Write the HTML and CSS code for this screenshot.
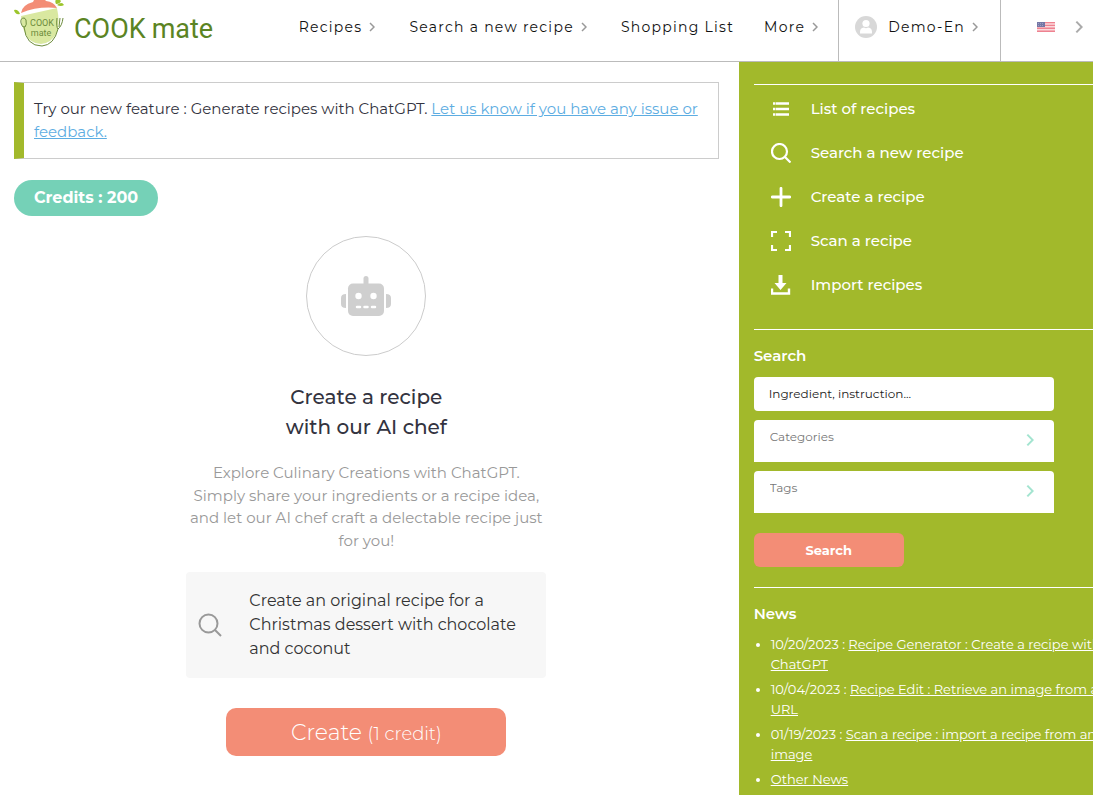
FILE: index.html
```html
<!DOCTYPE html>
<html lang="en">
<head>
    <meta charset="UTF-8">
    <meta name="viewport" content="width=device-width, initial-scale=1.0">
    <title>COOKmate - Recipe Generator</title>
    <link rel="stylesheet" href="styles.css">
</head>
<body>
    <header class="header">
        <a href="#" class="logo" aria-label="COOKmate">
            <svg class="logo-pot" width="52" height="48" viewBox="0 0 52 48">
                <path d="M7 16 L43 8 Q46 22 43 32 Q38 43 27 44 Q16 44 11 33 Q7 24 7 16Z" fill="#d9e8a0"/>
                <path d="M7 13 Q8 5 19 2 L20 0 H31 L32 1 Q40 2 43 8 Q24 6 7 13Z" fill="#f38d76"/>
                <path d="M21 1 Q26 -1 31 1" fill="none" stroke="#f38d76" stroke-width="2"/>
                <path d="M6 14 Q4 9 0 10 Q1 15 6 14Z M42 4 Q40 0 44 -2 L47 1 Q46 4 42 4Z M43 5 Q48 1 50 5 Q47 7 43 5Z" fill="#9cc52c"/>
                <path d="M10 18 Q6 18 7 23 Q8 28 11 27 Q13 25 12 20 Q11 18 10 18Z M10 27 Q12 46 28 46 Q40 45 44 29 M44 29 Q42 27 43 18 M44 29 Q48 26 49 18 M46 18 L45 27" fill="none" stroke="#6d8c3c" stroke-width="1"/>
                <text x="28" y="26" class="pot-text">COOK</text>
                <text x="27" y="36" class="pot-text">mate</text>
            </svg>
            <span class="logo-text"><span>COOK</span><span>mate</span></span>
        </a>
        <nav class="nav">
            <a href="#">Recipes <svg class="chevron" viewBox="0 0 6 10"><path d="M1 1l4 4-4 4"/></svg></a>
            <a href="#">Search a new recipe <svg class="chevron" viewBox="0 0 6 10"><path d="M1 1l4 4-4 4"/></svg></a>
            <a href="#">Shopping List</a>
            <a href="#">More <svg class="chevron" viewBox="0 0 6 10"><path d="M1 1l4 4-4 4"/></svg></a>
        </nav>
        <a href="#" class="account">
            <svg class="avatar" width="22" height="22" viewBox="0 0 22 22">
                <circle cx="11" cy="11" r="11" fill="#d8d8d8"/>
                <circle cx="11" cy="7.5" r="3.6" fill="#fff"/>
                <path d="M5 17.5 Q4.500 11.500 9 11.500 Q11 13 13 11.500 Q17.500 11.500 17 17.500Z" fill="#fff"/>
            </svg>
            <span>Demo-En</span>
            <svg class="chevron" viewBox="0 0 6 10"><path d="M1 1l4 4-4 4"/></svg>
        </a>
        <a href="#" class="language" aria-label="Language">
            <svg width="18" height="10" viewBox="0 0 18 10">
                <path fill="#fbd9dd" d="M0 0h18v10H0z"/>
                <path stroke="#ee8290" stroke-width="1.4" d="M0 .6h18M0 3.400h18M0 6.200h18M0 9.200h18"/>
                <path fill="#7577a6" d="M0 0h8v5H0z"/>
                <path stroke="#b9bad2" stroke-width=".6" stroke-dasharray="1 1" d="M1 1.500h6M1 3.500h6"/>
            </svg>
            <svg class="chevron chevron-big" viewBox="0 0 6 10"><path d="M1 1l4 4-4 4"/></svg>
        </a>
    </header>

    <div class="layout">
        <main class="main">
            <div class="notice">Try our new feature : Generate recipes with ChatGPT. <a href="#">Let us know if you have any issue or feedback.</a></div>
            <div class="credits">Credits : 200</div>

            <section class="generator">
                <div class="robot">
                    <svg width="50" height="40" viewBox="0 0 50 40" fill="#cfcfcf">
                        <rect x="22.500" y="0" width="5" height="12" rx="2.500"/>
                        <rect x="7" y="7.500" width="36" height="32.500" rx="5"/>
                        <path d="M5 18v14Q0 32 0 28v-6q0-4 5-4zM45 18v14q5 0 5-4v-6q0-4-5-4z"/>
                        <circle cx="17.500" cy="20" r="3.200" fill="#fff"/>
                        <circle cx="32.500" cy="20" r="3.200" fill="#fff"/>
                        <path d="M16 31h3M23.500 31h3M31 31h3" stroke="#fff" stroke-width="2.500" stroke-linecap="round"/>
                    </svg>
                </div>
                <h1>Create a recipe<br>with our AI chef</h1>
                <p>Explore Culinary Creations with ChatGPT.<br>Simply share your ingredients or a recipe idea,<br>and let our AI chef craft a delectable recipe just<br>for you!</p>
                <label class="prompt">
                    <svg width="24" height="24" viewBox="0 0 24 24" fill="none" stroke="#999" stroke-width="2">
                        <circle cx="10.500" cy="10.500" r="9"/>
                        <path d="M17 17l6 6"/>
                    </svg>
                    <textarea rows="3" aria-label="Recipe idea">Create an original recipe for a Christmas dessert with chocolate and coconut</textarea>
                </label>
                <button type="button" class="btn-create">Create <small>(1 credit)</small></button>
            </section>
        </main>

        <aside class="sidebar">
            <ul class="menu">
                <li><a href="#">
                    <svg viewBox="0 0 20 20" fill="none" stroke="#fff" stroke-width="2.600"><path d="M2 4.500h2.500M5 4.500H18M2 10h2.500M5 10H18M2 15.500h2.500M5 15.500H18"/></svg>
                    List of recipes</a></li>
                <li><a href="#">
                    <svg viewBox="0 0 20 20" fill="none" stroke="#fff" stroke-width="2.200"><circle cx="8.500" cy="8.500" r="7.500"/><path d="M14 14l5.500 5.500"/></svg>
                    Search a new recipe</a></li>
                <li><a href="#">
                    <svg viewBox="0 0 20 20" fill="none" stroke="#fff" stroke-width="2.800" stroke-linecap="round"><path d="M1.300 10h17.400M10 1.300v17.400"/></svg>
                    Create a recipe</a></li>
                <li><a href="#">
                    <svg viewBox="0 0 20 20" fill="none" stroke="#fff" stroke-width="2.200"><path d="M1 6V1h5M14 1h5v5M19 14v5h-5M6 19H1v-5"/></svg>
                    Scan a recipe</a></li>
                <li><a href="#">
                    <svg viewBox="0 0 20 20" fill="#fff"><path d="M7.500 0h4v8h4l-6 7-6-7h4z"/><path d="M1 13.500v5h17v-5" fill="none" stroke="#fff" stroke-width="2.400"/></svg>
                    Import recipes</a></li>
            </ul>

            <form class="search">
                <h2>Search</h2>
                <input type="text" placeholder="Ingredient, instruction..." aria-label="Ingredient, instruction">
                <label class="select-box">
                    <select aria-label="Categories"><option>Categories</option></select>
                    <svg class="chevron" viewBox="0 0 6 10"><path d="M1 1l4 4-4 4"/></svg>
                </label>
                <label class="select-box">
                    <select aria-label="Tags"><option>Tags</option></select>
                    <svg class="chevron" viewBox="0 0 6 10"><path d="M1 1l4 4-4 4"/></svg>
                </label>
                <button type="button" class="btn-search">Search</button>
            </form>

            <section class="news">
                <h2>News</h2>
                <ul>
                    <li>10/20/2023 : <a href="#">Recipe Generator : Create a recipe with<br>ChatGPT</a></li>
                    <li>10/04/2023 : <a href="#">Recipe Edit : Retrieve an image from an<br>URL</a></li>
                    <li>01/19/2023 : <a href="#">Scan a recipe : import a recipe from an<br>image</a></li>
                    <li><a href="#">Other News</a></li>
                </ul>
            </section>
        </aside>
    </div>
</body>
</html>
```
FILE: styles.css
```css
* {
    box-sizing: border-box;
}

body {
    margin: 0;
    min-height: 100vh;
    display: flex;
    flex-direction: column;
    overflow-x: hidden;
    font-family: Montserrat, Inter, sans-serif;
    font-size: 15px;
    line-height: 1.5;
    color: #333340;
    background-color: #ffffff;
}

input, textarea, select, button {
    font-family: inherit;
    border: none;
}

.chevron {
    width: 6px;
    height: 10px;
    fill: none;
    stroke: #999999;
    stroke-width: 1.5;
}

/* Header */
.header {
    display: flex;
    height: 62px;
    border-bottom: 1px solid #bbbbbb;
    font-size: 14px;
}

.header a {
    color: #111111;
    text-decoration: none;
    letter-spacing: 0.09em;
}

.header .logo {
    display: flex;
    gap: 8px;
    padding-left: 14px;
    letter-spacing: normal;
}

.pot-text {
    font-family: Roboto, sans-serif;
    font-size: 9px;
    text-anchor: middle;
    fill: #6d8c3c;
}

.logo-text {
    display: flex;
    gap: 6px;
    font-family: Roboto, sans-serif;
    font-size: 27px;
    line-height: 58px;
    color: #5b8423;
}

.nav {
    display: flex;
    gap: 30px;
    margin-left: auto;
    padding-right: 16px;
}

.nav a, .account, .language {
    display: flex;
    align-items: center;
    gap: 7px;
    padding-bottom: 7px;
}

.nav .chevron, .account .chevron {
    margin-right: 4px;
}

.account {
    padding-left: 16px;
    padding-right: 18px;
    border-left: 1px solid #bbbbbb;
    border-right: 1px solid #bbbbbb;
}

.avatar {
    margin-right: 4px;
}

.language {
    gap: 20px;
    padding-left: 36px;
    padding-right: 10px;
}

.chevron-big {
    width: 8px;
    height: 14px;
    stroke: #aaaaaa;
}

/* Page columns */
.layout {
    flex: 1;
    display: grid;
    grid-template-columns: 2fr 1fr;
    margin-right: -15px;
}

.main {
    padding: 20px 20px 20px 14px;
}

.notice {
    padding: 15px 10px;
    border: 1px solid #cccccc;
    border-left: 10px solid #a2b92b;
}

.notice a {
    color: #5dade2;
}

.credits {
    width: fit-content;
    margin-top: 21px;
    padding: 0 20px;
    border-radius: 18px;
    background-color: #75d1b7;
    color: #ffffff;
    font-size: 16px;
    font-weight: bold;
    line-height: 36px;
}

/* Recipe generator */
.generator {
    display: flex;
    flex-direction: column;
    align-items: center;
    margin-top: 20px;
    text-align: center;
}

.robot {
    display: flex;
    align-items: center;
    justify-content: center;
    width: 120px;
    height: 120px;
    border: 1px solid #cccccc;
    border-radius: 50%;
}

.generator h1 {
    margin: 26px 0 20px;
    font-size: 20px;
    font-weight: 500;
    line-height: 30px;
}

.generator p {
    margin: 0 0 20px;
    color: #999999;
}

.prompt {
    display: flex;
    align-items: center;
    gap: 27px;
    width: 360px;
    padding: 17px 12px;
    border-radius: 4px;
    background-color: #f7f7f7;
}

.prompt textarea {
    flex: 1;
    padding: 0;
    resize: none;
    overflow: hidden;
    background-color: transparent;
    color: #333333;
    font-size: 16px;
    line-height: 24px;
}

.btn-create {
    width: 280px;
    height: 48px;
    margin-top: 30px;
    border-radius: 10px;
    background-color: #f38d76;
    color: #ffffff;
    font-size: 22px;
    font-weight: 300;
}

.btn-create small {
    font-size: 18px;
}

/* Sidebar */
.sidebar {
    padding: 22px 0 0 15px;
    background-color: #a2b92b;
    color: #ffffff;
}

.sidebar a {
    color: #ffffff;
}

.sidebar ul {
    margin: 0;
    list-style-type: none;
}

.menu, .search, .news {
    border-top: 1px solid #ffffff;
}

.menu {
    padding: 2px 0 22px 17px;
}

.menu a {
    display: flex;
    align-items: center;
    gap: 20px;
    height: 44px;
    font-weight: 500;
    text-decoration: none;
}

.menu svg {
    width: 20px;
    height: 20px;
}

.sidebar h2 {
    margin: 0 0 10px;
    font-size: 15px;
    font-weight: 600;
    line-height: 22px;
}

.search {
    display: flex;
    flex-direction: column;
    align-items: flex-start;
    padding: 15px 0 20px;
}

.search input {
    width: 300px;
    height: 34px;
    padding: 0 15px 1px;
    border-radius: 4px;
    background-color: #ffffff;
    font-size: 12px;
}

.search input::placeholder {
    color: #222222;
}

.select-box {
    display: flex;
    width: 300px;
    align-items: center;
    margin-top: 9px;
    padding-right: 20px;
    padding-bottom: 2px;
    border-radius: 4px 4px 0 0;
    background-color: #ffffff;
}

.select-box select {
    flex: 1;
    height: 40px;
    padding: 0 16px 7px;
    appearance: none;
    background-color: transparent;
    color: #777777;
    font-size: 12px;
}

.select-box .chevron {
    width: 8px;
    height: 14px;
    stroke: #a3e4d0;
}

.btn-search {
    width: 150px;
    height: 34px;
    margin-top: 20px;
    border-radius: 6px;
    background-color: #f38d76;
    color: #ffffff;
    font-size: 13px;
    font-weight: bold;
}

.news {
    padding-top: 15px;
}

.sidebar .news ul {
    padding-left: 17px;
    list-style-type: disc;
    font-size: 13px;
    line-height: 20px;
}

.news h2 {
    margin-bottom: 9px;
}

.news li {
    margin-bottom: 5px;
    white-space: nowrap;
}
```
